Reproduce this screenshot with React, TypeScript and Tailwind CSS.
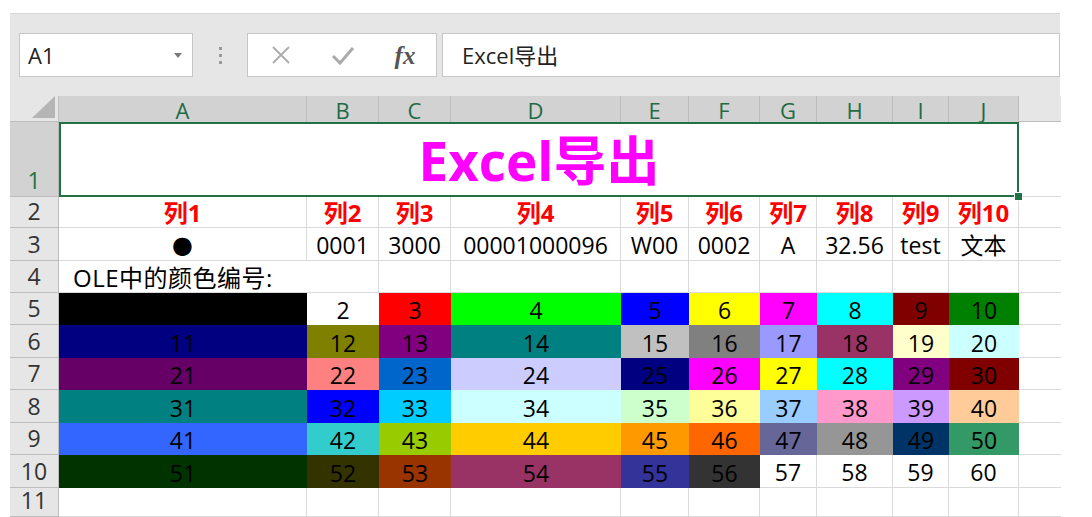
import React from "react";

const colors: Record<number, string> = {
  1: "#000000", 2: "#FFFFFF", 3: "#FF0000", 4: "#00FF00", 5: "#0000FF", 6: "#FFFF00", 7: "#FF00FF", 8: "#00FFFF", 9: "#800000", 10: "#008000",
  11: "#000080", 12: "#808000", 13: "#800080", 14: "#008080", 15: "#C0C0C0", 16: "#808080", 17: "#9999FF", 18: "#993366", 19: "#FFFFCC", 20: "#CCFFFF",
  21: "#660066", 22: "#FF8080", 23: "#0066CC", 24: "#CCCCFF", 25: "#000080", 26: "#FF00FF", 27: "#FFFF00", 28: "#00FFFF", 29: "#800080", 30: "#800000",
  31: "#008080", 32: "#0000FF", 33: "#00CCFF", 34: "#CCFFFF", 35: "#CCFFCC", 36: "#FFFF99", 37: "#99CCFF", 38: "#FF99CC", 39: "#CC99FF", 40: "#FFCC99",
  41: "#3366FF", 42: "#33CCCC", 43: "#99CC00", 44: "#FFCC00", 45: "#FF9900", 46: "#FF6600", 47: "#666699", 48: "#969696", 49: "#003366", 50: "#339966",
  51: "#003300", 52: "#333300", 53: "#993300", 54: "#993366", 55: "#333399", 56: "#333333",
};

const letters = ["A", "B", "C", "D", "E", "F", "G", "H", "I", "J"];
const row3 = ["●", "0001", "3000", "00001000096", "W00", "0002", "A", "32.56", "test", "文本"];

const cell = "border-r border-b border-[#dadada] flex items-end justify-center leading-none";
const rowHead = "bg-[#e6e6e6] border-r border-b border-[#bdbdbd] flex items-end justify-center pb-[4px] text-[23px] leading-none text-[#333]";

function RowHeader({ n, sel }: { n: number; sel?: boolean }) {
  return (
    <div className={sel ? "bg-[#d2d2d2] border-r border-b border-[#bdbdbd] flex items-end justify-center pb-[4px] text-[23px] leading-none text-[#217346]" : rowHead}>
      {n}
    </div>
  );
}

export default function App() {
  const colorRows = [5, 6, 7, 8, 9, 10];
  return (
    <div className="w-[1092px] h-[517px] bg-white overflow-hidden font-['Open_Sans','Noto_Sans_CJK_SC',sans-serif] text-black">
      <div className="h-[13px]" />
      {/* formula bar */}
      <div className="ml-[10px] w-[1050px] h-[83px] bg-[#e6e6e6] border-t border-[#d6d6d6] flex pt-[19px]">
        <div className="ml-[9px] w-[174px] h-[44px] bg-white border border-[#c6c6c6] flex items-center justify-between pl-[8px] pr-[10px]">
          <span className="text-[22px] text-[#222]">A1</span>
          <svg width="8" height="5" viewBox="0 0 8 5"><polygon points="0,0 8,0 4,5" fill="#7a7a7a" /></svg>
        </div>
        <div className="w-[54px] h-[44px] flex flex-col items-center justify-center gap-[4px]">
          <div className="w-[3px] h-[3px] bg-[#9a9a9a]" />
          <div className="w-[3px] h-[3px] bg-[#9a9a9a]" />
          <div className="w-[3px] h-[3px] bg-[#9a9a9a]" />
        </div>
        <div className="w-[190px] h-[44px] bg-white border border-[#c6c6c6] flex items-center">
          <div className="w-[63px] flex justify-center pl-[2px]">
            <svg width="22" height="22" viewBox="0 0 22 22"><path d="M3 3 L19 19 M19 3 L3 19" stroke="#ababab" strokeWidth="1.8" fill="none" /></svg>
          </div>
          <div className="w-[63px] flex justify-center">
            <svg width="24" height="22" viewBox="0 0 24 22"><path d="M2 12 L9 19 L22 4" stroke="#ababab" strokeWidth="3" fill="none" /></svg>
          </div>
          <div className="w-[62px] flex justify-center">
            <span className="font-['Liberation_Serif',serif] italic font-bold text-[25px] text-[#555] leading-none">fx</span>
          </div>
        </div>
        <div className="ml-[5px] w-[618px] h-[44px] bg-white border border-[#c6c6c6] flex items-center pl-[19px]">
          <span className="text-[22px] text-[#222]">Excel导出</span>
        </div>
      </div>

      {/* grid */}
      <div className="ml-[10px] w-[1051px] grid grid-cols-[49px_248px_72px_72px_170px_68px_71px_57px_76px_56px_70px_42px] grid-rows-[26px_75px_31px_33px_32px_32px_33px_32px_33px_32px_33px_29px]">
        {/* header row */}
        <div className="bg-[#e6e6e6] border-r border-b border-[#bdbdbd] relative">
          <svg className="absolute right-[3px] bottom-[3px]" width="23" height="22" viewBox="0 0 23 22"><polygon points="23,0 23,22 0,22" fill="#b5b5b5" /></svg>
        </div>
        {letters.map((l) => (
          <div key={l} className="bg-[#d2d2d2] border-r border-[#bcbcbc] flex items-center justify-center text-[22px] leading-none text-[#1f6b45] pt-[2px]">
            {l}
          </div>
        ))}
        <div className="bg-[#e6e6e6] border-b border-[#bdbdbd]" />

        {/* row 1 */}
        <RowHeader n={1} sel />
        <div className="col-span-10 border-2 border-[#217346] relative flex items-end justify-center pb-[8px]">
          <span className="text-[53px] font-bold text-[#ff00ff] leading-none">Excel导出</span>
          <div className="absolute -right-[6px] -bottom-[6px] w-[9px] h-[9px] bg-[#217346] border border-white" />
        </div>
        <div className="border-b border-[#dadada]" />

        {/* row 2 */}
        <RowHeader n={2} />
        {letters.map((l, i) => (
          <div key={l} className={cell + " text-[24px] font-bold text-[#ff0000] pb-[2px]"}>
            列{i + 1}
          </div>
        ))}
        <div className="border-b border-[#dadada]" />

        {/* row 3 */}
        <RowHeader n={3} />
        {row3.map((v, i) => (
          <div key={i} className={cell + " text-[23px] pb-[3px]"}>
            {i === 0 ? <span className="font-['DejaVu_Sans',sans-serif] text-[24px] leading-none">{v}</span> : v}
          </div>
        ))}
        <div className="border-b border-[#dadada]" />

        {/* row 4 */}
        <RowHeader n={4} />
        <div className="border-b border-[#dadada] flex items-end pl-[14px] pb-[2px] text-[24px] leading-none tracking-[0.5px]">
          OLE中的颜色编号:
        </div>
        {letters.slice(1).map((l) => (
          <div key={l} className={cell} />
        ))}
        <div className="border-b border-[#dadada]" />

        {colorRows.map((r) => (
          <React.Fragment key={r}>
            <RowHeader n={r} />
            {letters.map((l, c) => {
              const n = (r - 5) * 10 + c + 1;
              const bg = colors[n];
              return bg ? (
                <div key={l} className="flex items-end justify-center pb-[3px] text-[23px] leading-none text-black" style={{ backgroundColor: bg }}>
                  {n}
                </div>
              ) : (
                <div key={l} className={cell + " text-[23px] pb-[3px]"}>
                  {n}
                </div>
              );
            })}
            <div className="border-b border-[#dadada]" />
          </React.Fragment>
        ))}

        {/* row 11 */}
        <RowHeader n={11} />
        {letters.map((l) => (
          <div key={l} className={cell} />
        ))}
        <div className="border-b border-[#dadada]" />
      </div>
    </div>
  );
}
